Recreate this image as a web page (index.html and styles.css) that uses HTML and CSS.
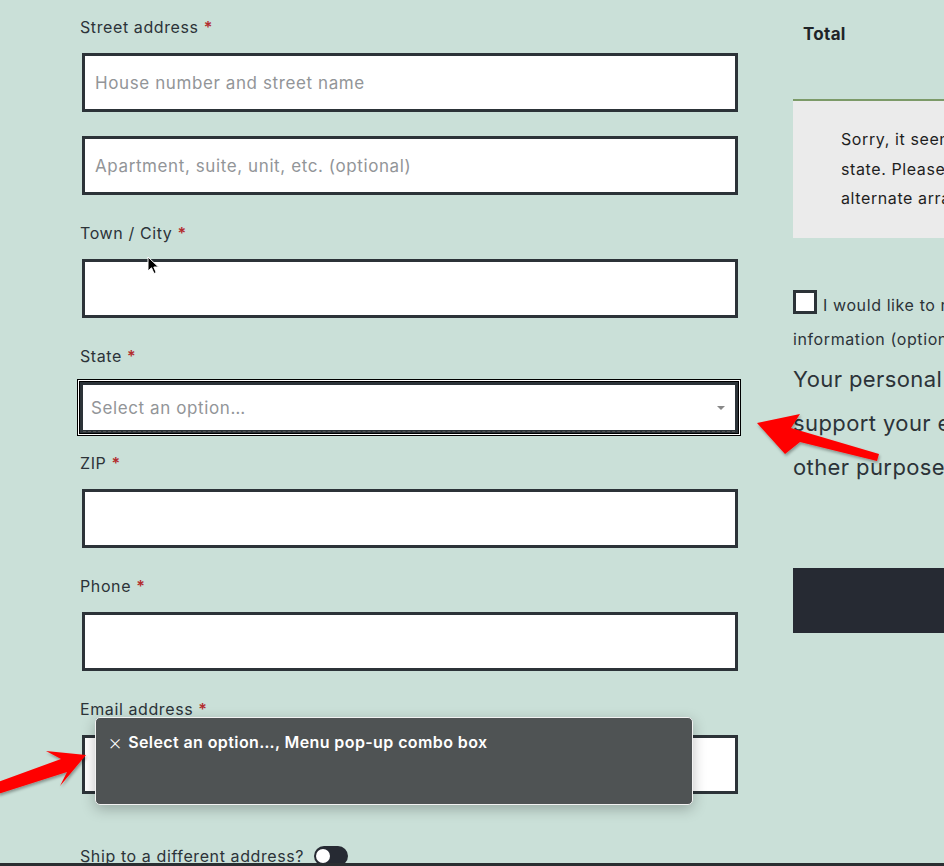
FILE: index.html
```html
<!DOCTYPE html>
<html lang="en">
<head>
<meta charset="utf-8">
<title>Checkout</title>
<link rel="stylesheet" href="styles.css">
</head>
<body>
<div class="page">
  <div class="form-col">
    <div class="field">
      <div class="label">Street address <span class="req">*</span></div>
      <div class="input"><span class="ph">House number and street name</span></div>
      <div class="input input-extra"><span class="ph">Apartment, suite, unit, etc. (optional)</span></div>
    </div>
    <div class="field">
      <div class="label">Town / City <span class="req">*</span></div>
      <div class="input"></div>
    </div>
    <div class="field">
      <div class="label">State <span class="req">*</span></div>
      <div class="select"><span class="ph">Select an option…</span><span class="caret"></span></div>
    </div>
    <div class="field field-after-select">
      <div class="label">ZIP <span class="req">*</span></div>
      <div class="input"></div>
    </div>
    <div class="field">
      <div class="label">Phone <span class="req">*</span></div>
      <div class="input"></div>
    </div>
    <div class="field">
      <div class="label">Email address <span class="req">*</span></div>
      <div class="input"></div>
    </div>
    <div class="ship">Ship to a different address? <span class="toggle"><span class="knob"></span></span></div>
  </div>

  <div class="side-col">
    <div class="total">Total</div>
    <div class="notice">Sorry, it seems that there are no available payment methods for your<br>state. Please contact us if you require assistance or wish to make<br>alternate arrangements.</div>
    <p class="optin"><span class="checkbox"></span>I would like to receive exclusive emails with discounts and product<br>information (optional)</p>
    <p class="privacy">Your personal data will be used to process your order,<br>support your experience throughout this website, and for<br>other purposes described in our privacy policy.</p>
    <div class="place-order"></div>
  </div>
</div>

<div class="tooltip"><span class="x">×</span>Select an option…, Menu pop-up combo box</div>

<svg class="arrows" width="944" height="866" viewBox="0 0 944 866" aria-hidden="true">
  <defs>
    <filter id="sh" x="-20%" y="-20%" width="140%" height="140%">
      <feDropShadow dx="1" dy="2" stdDeviation="1.5" flood-color="#000" flood-opacity="0.35"/>
    </filter>
  </defs>
  <polygon filter="url(#sh)" fill="#ff0000" points="757,423 800,414 791,428 879,454 877,461 800,442 785,454"/>
  <polygon filter="url(#sh)" fill="#ff0000" points="86,755 46,751 61,759 -2,782 -2,794 67,772 60,786"/>
</svg>

<svg class="cursor" width="14" height="20" viewBox="0 0 14 20" aria-hidden="true">
  <path d="M1 1 L1 15 L4.5 11.8 L7 17.5 L9.2 16.5 L6.8 11 L11.5 11 Z" fill="#000" stroke="#fff" stroke-width="1"/>
</svg>

<div class="bottom-bar"></div>
</body>
</html>
```

FILE: styles.css
```css
html, body {
  margin: 0;
  padding: 0;
  overflow: hidden;
  width: 944px;
  height: 866px;
}

body {
  background: #cae0d8;
  font-family: Inter, "Noto Sans", "Liberation Sans", sans-serif;
  color: #2c3338;
  position: relative;
  letter-spacing: 0.6px;
}

.page {
  display: flex;
  gap: 53px;
  padding: 15px 0 0 80px;
  width: 1400px;
}

.form-col {
  width: 660px;
  flex: none;
}

.field + .field {
  margin-top: 26px;
}

.field-after-select {
  margin-top: 18px !important;
}

.label {
  height: 24px;
  line-height: 24px;
  font-size: 16px;
  margin-bottom: 14px;
}

.req {
  color: #b32d2e;
  font-weight: 600;
}

.input {
  margin-left: 2px;
  width: 656px;
  height: 59px;
  box-sizing: border-box;
  border: 3px solid #2c3338;
  background: #fff;
  padding-left: 10px;
  display: flex;
  align-items: center;
}

.input-extra {
  margin-top: 24px;
}

.ph {
  color: #929598;
  font-size: 17px;
}

.select {
  position: relative;
  width: 658px;
  height: 51px;
  box-sizing: border-box;
  border: 3px solid #2c3338;
  background: #fff;
  padding-left: 8px;
  display: flex;
  align-items: center;
  box-shadow: 0 0 0 1px #000, 0 0 0 2px #fff, 0 0 0 3px #000;
}

.select::after {
  content: "";
  position: absolute;
  left: 0;
  right: 0;
  bottom: -2px;
  border-bottom: 1px dashed #555;
}

.caret {
  margin-left: auto;
  margin-right: 10px;
  width: 0;
  height: 0;
  border-left: 4px solid transparent;
  border-right: 4px solid transparent;
  border-top: 4px solid #888;
}

.ship {
  margin-top: 50px;
  font-size: 16px;
  line-height: 24px;
  display: flex;
  align-items: center;
  gap: 10px;
}

.toggle {
  display: inline-flex;
  align-items: center;
  width: 34px;
  height: 20px;
  border-radius: 10px;
  background: #262a33;
  box-sizing: border-box;
  padding-left: 2px;
}

.knob {
  width: 14px;
  height: 14px;
  border-radius: 50%;
  background: #fff;
}

.side-col {
  width: 560px;
  flex: none;
}

.total {
  padding: 7px 0 0 10px;
  font-size: 17px;
  font-weight: 700;
  line-height: 24px;
  color: #1f2428;
  letter-spacing: 0.3px;
}

.notice {
  margin-top: 53px;
  border-top: 2px solid #7c9a68;
  background: #ebebeb;
  padding: 24px 0 24px 48px;
  font-size: 16px;
  line-height: 29.5px;
  color: #1e1e1e;
  white-space: nowrap;
}

.optin {
  margin: 50px 0 0;
  font-size: 16px;
  line-height: 34px;
  white-space: nowrap;
}

.checkbox {
  display: inline-block;
  width: 24px;
  height: 24px;
  box-sizing: border-box;
  border: 3px solid #2c3338;
  background: #fff;
  margin-right: 6px;
  vertical-align: -3px;
}

.privacy {
  margin: 1px 0 0;
  font-size: 22px;
  line-height: 44px;
  white-space: nowrap;
  letter-spacing: 0.4px;
}

.place-order {
  margin-top: 79px;
  height: 65px;
  background: #262a33;
}

.tooltip {
  position: absolute;
  left: 95px;
  top: 717px;
  width: 598px;
  height: 88px;
  box-sizing: border-box;
  border: 1.5px solid #f2f2f2;
  border-radius: 5px;
  background: #4f5354;
  color: #fff;
  font-size: 16px;
  font-weight: 600;
  line-height: 24px;
  letter-spacing: 0.4px;
  padding: 12px 0 0 12px;
  box-shadow: 0 4px 14px rgba(0, 0, 0, 0.25);
  display: flex;
  align-items: flex-start;
}

.tooltip .x {
  font-weight: 200;
  font-size: 22px;
  margin-right: 6px;
  letter-spacing: 0;
}

.arrows {
  position: absolute;
  left: 0;
  top: 0;
  pointer-events: none;
}

.cursor {
  position: absolute;
  left: 147px;
  top: 256px;
}

.bottom-bar {
  position: absolute;
  left: 0;
  bottom: 0;
  width: 944px;
  height: 3px;
  background: #2a2e31;
}
```
